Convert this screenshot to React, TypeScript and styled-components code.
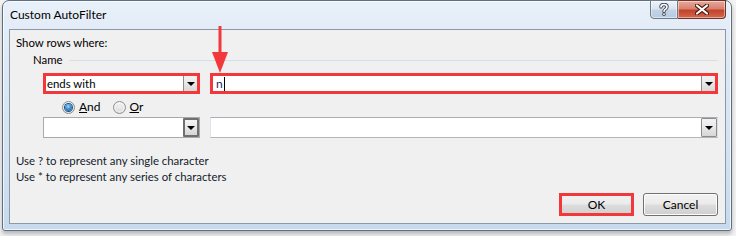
import React from 'react';
import styled, { createGlobalStyle } from 'styled-components';

const GlobalStyle = createGlobalStyle`
  html, body {
    margin: 0;
    padding: 0;
    background: #f3f3f3;
  }
  body {
    font-family: 'Lato', 'Liberation Sans', sans-serif;
    font-size: 11.4px;
    color: #000;
  }
`;

const Stage = styled.div`
  padding-left: 2px;
  width: 736px;
  height: 236px;
  box-sizing: border-box;
`;

// Windows 7 style frame
const Window = styled.div`
  position: relative;
  width: 730px;
  box-sizing: border-box;
  border: 1px solid #5f6f82;
  border-radius: 7px 7px 3px 3px;
  padding: 0 5px 6px 6px;
  background: linear-gradient(to bottom, #e8f0f9 0%, #dde8f4 30%, #d2e1f0 70%, #c6daee 100%);
  box-shadow: inset 0 0 0 1px rgba(255, 255, 255, 0.7), 0 3px 4px rgba(0, 0, 0, 0.25);
`;

const TitleBar = styled.div`
  display: flex;
  align-items: flex-start;
  height: 28px;
`;

const TitleText = styled.div`
  flex: 1;
  padding: 6px 0 0 1px;
  font-size: 12px;
  line-height: 16px;
`;

const CaptionButtons = styled.div`
  display: flex;
  margin-top: -1px;
`;

const CaptionButton = styled.div<{ $close?: boolean }>`
  width: ${({ $close }) => ($close ? '48px' : '28px')};
  height: 19px;
  box-sizing: border-box;
  display: flex;
  align-items: center;
  justify-content: center;
  border: 1px solid ${({ $close }) => ($close ? '#6b3426' : '#6d7c8c')};
  border-left-width: ${({ $close }) => ($close ? '0' : '1px')};
  border-radius: ${({ $close }) => ($close ? '0 0 4px 0' : '0 0 0 4px')};
  background: ${({ $close }) =>
    $close
      ? 'linear-gradient(to bottom, #e8a99c 0%, #d7826f 45%, #c4432b 55%, #d5674f 100%)'
      : 'linear-gradient(to bottom, #eef3f9 0%, #dbe5f0 45%, #c2d3e5 55%, #b6cbe2 100%)'};
  box-shadow: inset 0 0 0 1px rgba(255, 255, 255, 0.45);
`;

const CaptionGlyph = styled.svg`
  display: block;
`;

const ClientArea = styled.div`
  display: flex;
  flex-direction: column;
  border: 1px solid #8a98a8;
  background: #f0f0f0;
  padding: 5px 7px 7px 6px;
`;

const Label = styled.div`
  line-height: 16px;
  height: 16px;
  white-space: nowrap;
`;

const GroupHeader = styled.div`
  display: flex;
  align-items: center;
  gap: 6px;
  height: 16px;
  margin: 1px 0 0 17px;
`;

const GroupLine = styled.div`
  flex: 1;
  height: 1px;
  background: #d5dfe5;
`;

const ConditionRow = styled.div<{ $top: number }>`
  display: grid;
  grid-template-columns: 157px 1fr;
  column-gap: 10px;
  margin: ${({ $top }) => $top}px 0 0 27px;
  height: 21px;
`;

// red annotation box drawn over a control
const markBox = `
  &::after {
    content: '';
    position: absolute;
    inset: -1px;
    border: 3px solid #f2383b;
    pointer-events: none;
  }
`;

const Combo = styled.div<{ $marked?: boolean }>`
  position: relative;
  display: flex;
  align-items: center;
  box-sizing: border-box;
  height: 21px;
  background: #fff;
  border: 1px solid #a9a9a9;
  padding-left: 3px;
  ${({ $marked }) => ($marked ? markBox : '')}
`;

const Field = styled(Combo)`
  border-color: #abadb3 #dbdfe6 #b5b5b5 #e2e3ea;
`;

const ComboText = styled.span`
  flex: 1;
  display: flex;
  align-items: center;
  line-height: 16px;
`;

const TypedText = styled.span`
  color: #1d2566;
  line-height: 16px;
  padding-left: 2px;
  font-size: 12px;
`;

const Caret = styled.span`
  display: inline-block;
  width: 1px;
  height: 14px;
  background: #000;
  margin-left: 1px;
`;

const DropButton = styled.div<{ $dark?: boolean }>`
  width: 16px;
  height: 19px;
  box-sizing: border-box;
  display: flex;
  align-items: center;
  justify-content: center;
  border: ${({ $dark }) => ($dark ? '2px solid #707070' : '1px solid #8c8c8c')};
  border-radius: 1px;
  background: linear-gradient(to bottom, #f4f4f4 0%, #e8e8e8 50%, #d6d6d6 100%);
`;

const DownTriangle = styled.span`
  width: 0;
  height: 0;
  border-left: 4px solid transparent;
  border-right: 4px solid transparent;
  border-top: 4px solid #000;
`;

const RadioRow = styled.div`
  display: flex;
  align-items: center;
  height: 16px;
  margin: 5px 0 0 46px;
  gap: 12px;
`;

const RadioOption = styled.label`
  display: flex;
  align-items: center;
  gap: 4px;
  line-height: 16px;
  font-size: 12px;
`;

const RadioCircle = styled.span<{ $checked?: boolean }>`
  width: 13px;
  height: 13px;
  box-sizing: border-box;
  border-radius: 50%;
  border: 1px solid #8e8f8f;
  background: radial-gradient(circle at 50% 35%, #ffffff 0%, #ececec 60%, #d4d4d4 100%);
  display: flex;
  align-items: center;
  justify-content: center;

  &::after {
    content: '';
    width: 7px;
    height: 7px;
    border-radius: 50%;
    background: ${({ $checked }) =>
      $checked
        ? 'radial-gradient(circle at 45% 35%, #a4d7fb 0%, #3d8fd3 45%, #114f8f 100%)'
        : 'radial-gradient(circle at 50% 35%, #f2f2f2 0%, #d6d6d6 100%)'};
    box-shadow: ${({ $checked }) => ($checked ? '0 0 0 1px #1c5180' : 'none')};
  }
`;

const Hints = styled.div`
  margin-top: 15px;
  color: #121c2c;
`;

const ButtonRow = styled.div`
  display: flex;
  justify-content: flex-end;
  gap: 9px;
  margin-top: 8px;
`;

const PushButton = styled.button<{ $marked?: boolean }>`
  position: relative;
  width: 75px;
  height: 23px;
  box-sizing: border-box;
  border: 1px solid #707070;
  border-radius: 3px;
  background: linear-gradient(to bottom, #f2f2f2 0%, #ebebeb 49%, #dddddd 51%, #cfcfcf 100%);
  box-shadow: inset 0 0 0 1px #fcfcfc;
  font: inherit;
  font-size: 12px;
  color: #000;
  padding: 0;
  ${({ $marked }) => ($marked ? markBox : '')}
`;

const ArrowMark = styled.svg`
  position: absolute;
  left: 208px;
  top: 25px;
`;

export default function App() {
  return (
    <>
      <GlobalStyle />
      <Stage>
        <Window>
          <TitleBar>
            <TitleText>Custom AutoFilter</TitleText>
            <CaptionButtons>
              <CaptionButton>
                <CaptionGlyph width="10" height="13" viewBox="0 0 10 13">
                  <path
                    d="M2 4 Q2 1.5 5 1.5 Q8 1.5 8 4 Q8 5.6 6.2 6.4 Q5 7 5 8.5"
                    fill="none"
                    stroke="#3b4654"
                    strokeWidth="3.4"
                    strokeLinecap="round"
                  />
                  <path
                    d="M2 4 Q2 1.5 5 1.5 Q8 1.5 8 4 Q8 5.6 6.2 6.4 Q5 7 5 8.5"
                    fill="none"
                    stroke="#fff"
                    strokeWidth="1.6"
                    strokeLinecap="round"
                  />
                  <circle cx="5" cy="11.2" r="1.7" fill="#3b4654" />
                  <circle cx="5" cy="11.2" r="0.9" fill="#fff" />
                </CaptionGlyph>
              </CaptionButton>
              <CaptionButton $close>
                <CaptionGlyph width="14" height="11" viewBox="0 0 14 11">
                  <path d="M2 1.5 L12 9.5 M12 1.5 L2 9.5" stroke="#4a1a10" strokeWidth="4.2" strokeLinecap="round" />
                  <path d="M2 1.5 L12 9.5 M12 1.5 L2 9.5" stroke="#fff" strokeWidth="2.2" strokeLinecap="round" />
                </CaptionGlyph>
              </CaptionButton>
            </CaptionButtons>
          </TitleBar>

          <ClientArea>
            <Label>Show rows where:</Label>
            <GroupHeader>
              <Label>Name</Label>
              <GroupLine />
            </GroupHeader>

            <ConditionRow $top={5}>
              <Combo $marked>
                <ComboText>ends with</ComboText>
                <DropButton>
                  <DownTriangle />
                </DropButton>
              </Combo>
              <Field $marked>
                <ComboText>
                  <TypedText>n</TypedText>
                  <Caret />
                </ComboText>
                <DropButton>
                  <DownTriangle />
                </DropButton>
              </Field>
            </ConditionRow>

            <RadioRow>
              <RadioOption>
                <RadioCircle $checked />
                <span>
                  <u>A</u>nd
                </span>
              </RadioOption>
              <RadioOption>
                <RadioCircle />
                <span>
                  <u>O</u>r
                </span>
              </RadioOption>
            </RadioRow>

            <ConditionRow $top={2}>
              <Combo>
                <ComboText />
                <DropButton $dark>
                  <DownTriangle />
                </DropButton>
              </Combo>
              <Field>
                <ComboText />
                <DropButton>
                  <DownTriangle />
                </DropButton>
              </Field>
            </ConditionRow>

            <Hints>
              <Label>Use ? to represent any single character</Label>
              <Label>Use * to represent any series of characters</Label>
            </Hints>

            <ButtonRow>
              <PushButton $marked>OK</PushButton>
              <PushButton>Cancel</PushButton>
            </ButtonRow>
          </ClientArea>

          {/* red annotation arrow pointing at the value box */}
          <ArrowMark width="18" height="48" viewBox="0 0 18 48">
            <line x1="9" y1="0" x2="9" y2="28" stroke="#f2383b" strokeWidth="3" />
            <polygon points="1,26 17,26 9,47" fill="#f2383b" />
          </ArrowMark>
        </Window>
      </Stage>
    </>
  );
}
